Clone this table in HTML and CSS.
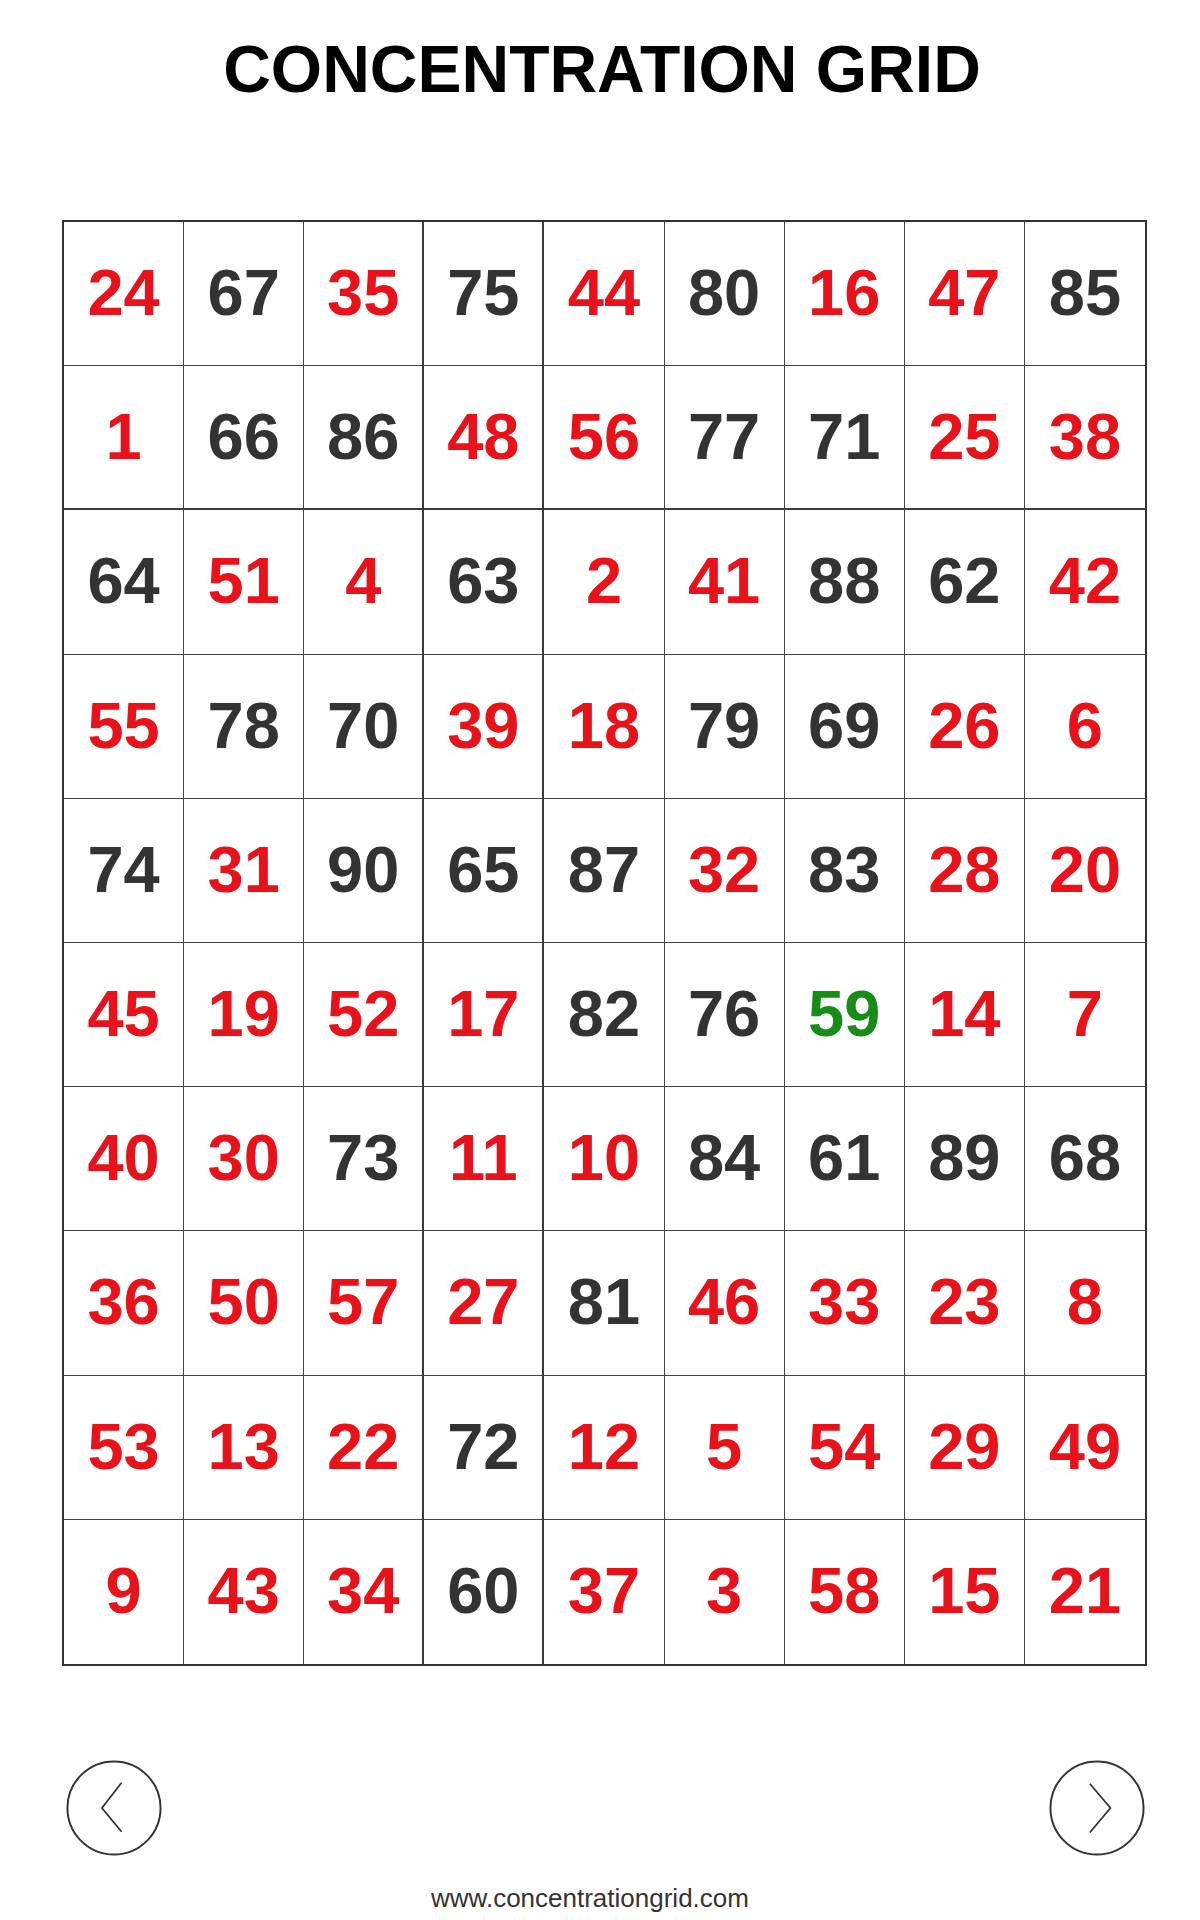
FILE: index.html
```html
<!DOCTYPE html>
<html>
<head>
<meta charset="utf-8">
<link rel="stylesheet" href="styles.css">
</head>
<body>
<h1 class="title">CONCENTRATION GRID</h1>
<div class="grid">
<div class="c r">24</div><div class="c d">67</div><div class="c r">35</div><div class="c d">75</div><div class="c r">44</div><div class="c d">80</div><div class="c r">16</div><div class="c r">47</div><div class="c d">85</div>
<div class="c r">1</div><div class="c d">66</div><div class="c d">86</div><div class="c r">48</div><div class="c r">56</div><div class="c d">77</div><div class="c d">71</div><div class="c r">25</div><div class="c r">38</div>
<div class="c d">64</div><div class="c r">51</div><div class="c r">4</div><div class="c d">63</div><div class="c r">2</div><div class="c r">41</div><div class="c d">88</div><div class="c d">62</div><div class="c r">42</div>
<div class="c r">55</div><div class="c d">78</div><div class="c d">70</div><div class="c r">39</div><div class="c r">18</div><div class="c d">79</div><div class="c d">69</div><div class="c r">26</div><div class="c r">6</div>
<div class="c d">74</div><div class="c r">31</div><div class="c d">90</div><div class="c d">65</div><div class="c d">87</div><div class="c r">32</div><div class="c d">83</div><div class="c r">28</div><div class="c r">20</div>
<div class="c r">45</div><div class="c r">19</div><div class="c r">52</div><div class="c r">17</div><div class="c d">82</div><div class="c d">76</div><div class="c g">59</div><div class="c r">14</div><div class="c r">7</div>
<div class="c r">40</div><div class="c r">30</div><div class="c d">73</div><div class="c r">11</div><div class="c r">10</div><div class="c d">84</div><div class="c d">61</div><div class="c d">89</div><div class="c d">68</div>
<div class="c r">36</div><div class="c r">50</div><div class="c r">57</div><div class="c r">27</div><div class="c d">81</div><div class="c r">46</div><div class="c r">33</div><div class="c r">23</div><div class="c r">8</div>
<div class="c r">53</div><div class="c r">13</div><div class="c r">22</div><div class="c d">72</div><div class="c r">12</div><div class="c r">5</div><div class="c r">54</div><div class="c r">29</div><div class="c r">49</div>
<div class="c r">9</div><div class="c r">43</div><div class="c r">34</div><div class="c d">60</div><div class="c r">37</div><div class="c r">3</div><div class="c r">58</div><div class="c r">15</div><div class="c r">21</div>
</div>
<div class="nav">
  <svg class="btn" width="98" height="98" viewBox="0 0 100 100"><circle cx="50" cy="50" r="47.5" fill="none" stroke="#333" stroke-width="2"/><polyline points="57.7,24.3 37.7,50 57.7,74.3" fill="none" stroke="#333" stroke-width="1.8"/></svg>
  <svg class="btn" width="98" height="98" viewBox="0 0 100 100"><circle cx="50" cy="50" r="47.5" fill="none" stroke="#333" stroke-width="2"/><polyline points="42.7,25.3 63.7,50 42.7,75" fill="none" stroke="#333" stroke-width="1.8"/></svg>
</div>
<div class="footer">www.concentrationgrid.com</div>
</body>
</html>
```
FILE: styles.css
```css
html, body {
  margin: 0;
  padding: 0;
  background: #fff;
}
body {
  width: 1200px;
  font-family: "Liberation Sans", Arial, sans-serif;
}
.title {
  margin: 29px 0 0 0;
  padding-left: 4px;
  height: 80px;
  line-height: 80px;
  font-size: 66px;
  font-weight: bold;
  text-align: center;
  color: #000;
}
.grid {
  box-sizing: border-box;
  margin: 111px 0 0 62px;
  width: 1085px;
  height: 1446px;
  border: 2px solid #333;
  display: grid;
  grid-template-columns: repeat(9, 1fr);
  grid-template-rows: repeat(10, 1fr);
}
.c {
  box-sizing: border-box;
  border-right: 1px solid #444;
  border-bottom: 1px solid #444;
  display: flex;
  align-items: center;
  justify-content: center;
  font-size: 65px;
  font-weight: bold;
  padding-bottom: 2px;
}
.c:nth-child(9n) { border-right: none; }
.c:nth-child(9n+3) { border-right: 2px solid #3a3a3a; }
.c:nth-child(9n+4) { border-right: 2px solid #3a3a3a; }
.c:nth-child(n+10):nth-child(-n+18) { border-bottom: 2px solid #3a3a3a; }
.c:nth-child(n+82) { border-bottom: none; }
.r { color: #e8121b; }
.d { color: #333; }
.g { color: #178c17; }
.nav {
  display: flex;
  justify-content: space-between;
  margin-top: 93px;
  padding: 0 54px 0 65px;
  height: 98px;
}
.btn { display: block; }
.footer {
  margin-top: 26px;
  padding-right: 20px;
  text-align: center;
  font-size: 26px;
  line-height: 30px;
  color: #333;
}
```
